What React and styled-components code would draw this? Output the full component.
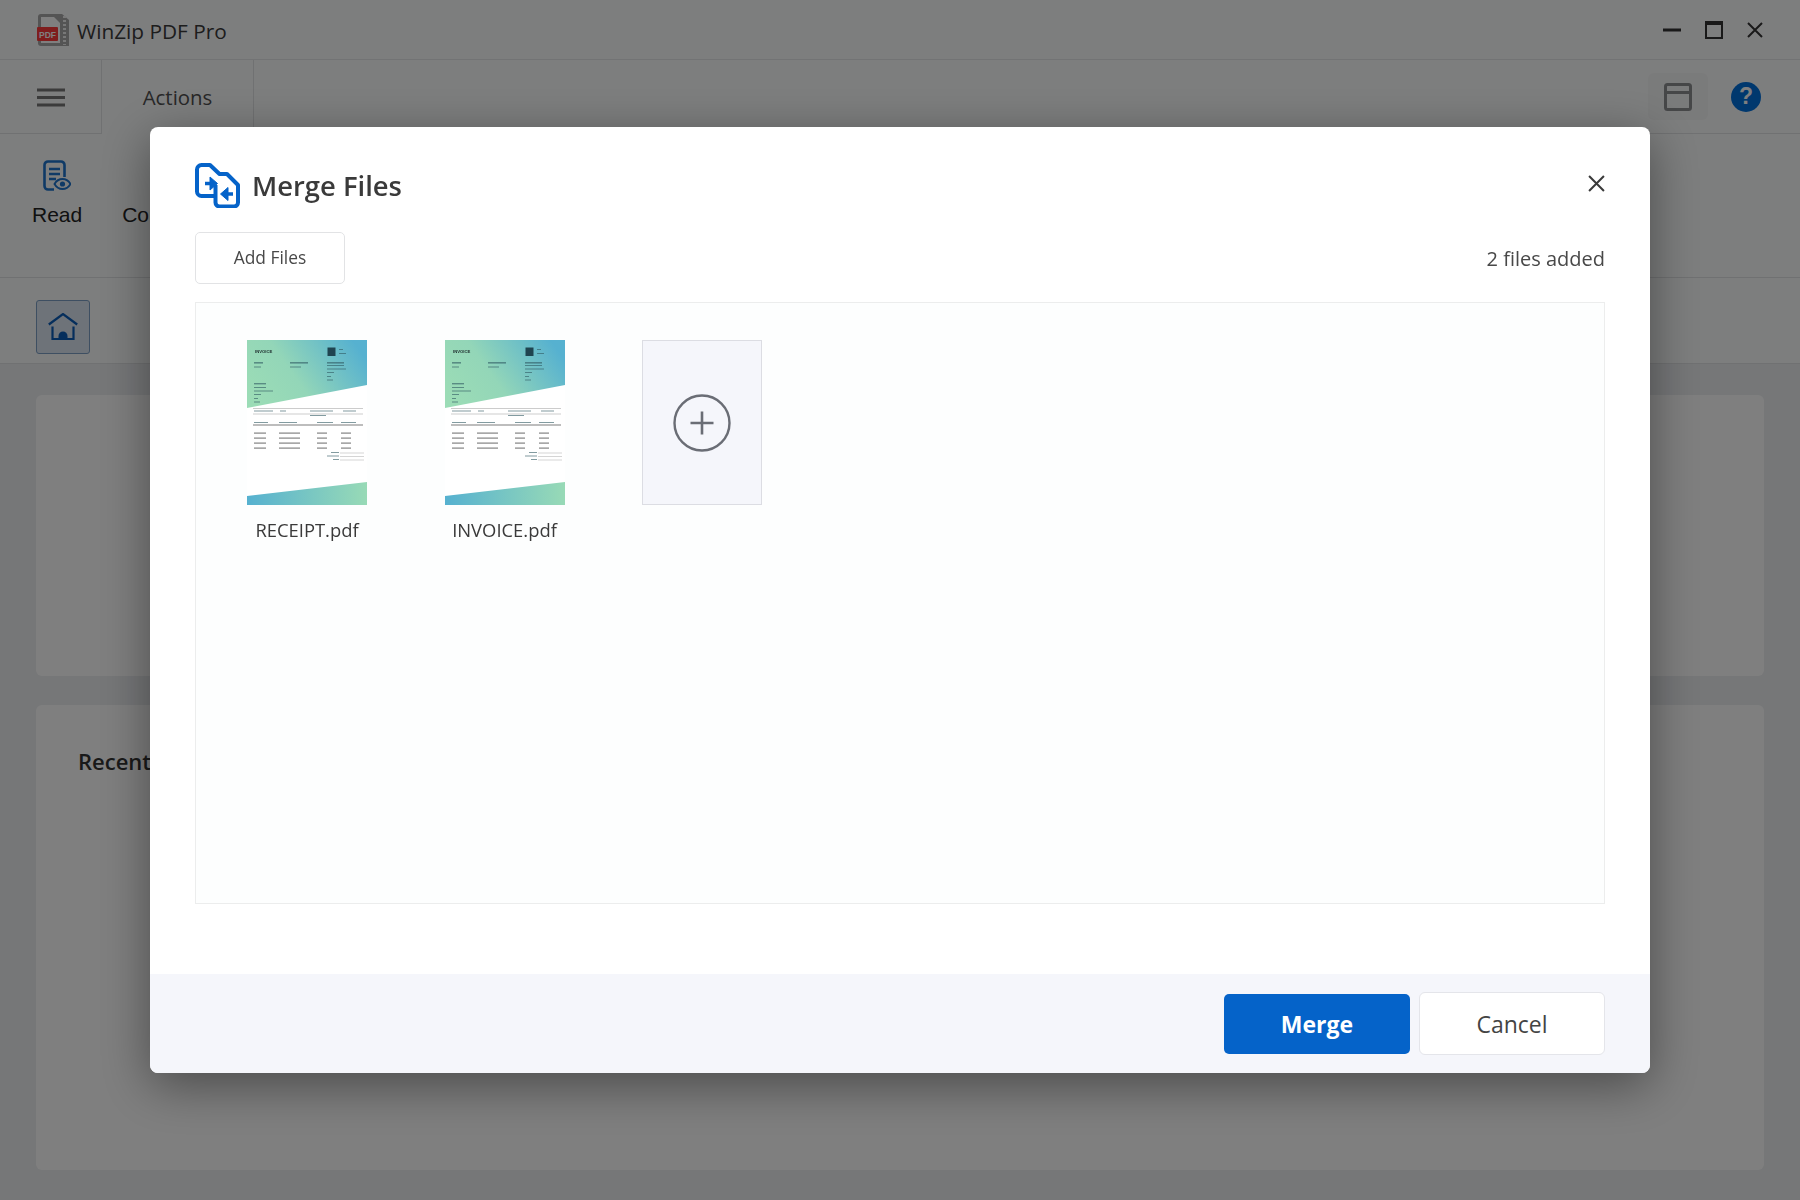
import React from "react";
import styled, { createGlobalStyle } from "styled-components";

const GlobalStyle = createGlobalStyle`
  html, body {
    margin: 0;
    padding: 0;
    height: 100%;
    font-family: "Open Sans", "Noto Sans", sans-serif;
    color: #333;
  }
`;

const Page = styled.div`
  width: 1800px;
  height: 1200px;
  overflow: hidden;
  display: flex;
  flex-direction: column;
  background: #eceef1;
`;

const TitleBar = styled.header`
  height: 60px;
  flex: none;
  box-sizing: border-box;
  display: flex;
  align-items: center;
  padding: 0 37px 0 36px;
  background: #fbfcfd;
  border-bottom: 1px solid #e4e6e8;
`;

const AppName = styled.span`
  margin: 2px 0 0 7px;
  flex: 1;
  font-size: 20.8px;
  color: #3a3a3a;
`;

const WindowButtons = styled.div`
  display: flex;
  align-items: center;
  gap: 24px;
`;

const TabRow = styled.div`
  height: 74px;
  flex: none;
  display: flex;
  background: #fbfcfd;
`;

const MenuCell = styled.div`
  width: 102px;
  display: flex;
  align-items: center;
  justify-content: center;
  box-sizing: border-box;
  padding-top: 2px;
  border-right: 1px solid #e0e2e4;
  border-bottom: 1px solid #e0e2e4;
`;

const ActionsTab = styled.div`
  width: 151px;
  display: flex;
  align-items: center;
  justify-content: center;
  font-size: 20.4px;
  color: #505050;
  border-right: 1px solid #e0e2e4;
`;

const TabFill = styled.div`
  flex: 1;
  display: flex;
  align-items: center;
  justify-content: flex-end;
  padding: 0 39px 0 0;
  gap: 23px;
  border-bottom: 1px solid #e0e2e4;
`;

const LayoutButton = styled.div`
  width: 60px;
  height: 47px;
  border-radius: 6px;
  background: #f5f6f7;
  display: flex;
  align-items: center;
  justify-content: center;
`;

const HelpBadge = styled.div`
  width: 30px;
  height: 30px;
  border-radius: 50%;
  background: #0070dc;
  color: #fff;
  font-family: "Liberation Sans", sans-serif;
  font-weight: 700;
  font-size: 23px;
  display: flex;
  align-items: center;
  justify-content: center;
`;

const Ribbon = styled.div`
  height: 144px;
  flex: none;
  box-sizing: border-box;
  display: flex;
  gap: 40px;
  padding: 26px 0 0 32px;
  background: #fbfcfd;
  border-bottom: 1px solid #e0e2e4;
`;

const RibbonItem = styled.div`
  display: flex;
  flex-direction: column;
  align-items: center;
  gap: 12px;
  font-family: "Liberation Sans", sans-serif;
  font-size: 21px;
  color: #222;
`;

const HomeRow = styled.div`
  height: 86px;
  flex: none;
  box-sizing: border-box;
  padding: 22px 0 0 36px;
  background: #fbfcfd;
  border-bottom: 1px solid #e0e2e4;
`;

const HomeButton = styled.div`
  width: 54px;
  height: 54px;
  box-sizing: border-box;
  display: flex;
  align-items: center;
  justify-content: center;
  border: 1px solid #7d9fc4;
  border-radius: 3px;
  background: #dde6f2;
`;

const Main = styled.main`
  display: flex;
  flex-direction: column;
  gap: 29px;
  padding: 31px 36px 0;
`;

const Panel = styled.section`
  box-sizing: border-box;
  height: ${({ $height }) => $height}px;
  background: #fff;
  border-radius: 6px;
  padding: 41px 42px;
`;

const PanelTitle = styled.h2`
  margin: 0;
  font-size: 22px;
  font-weight: 600;
  color: #333;
`;

const Overlay = styled.div`
  position: fixed;
  inset: 0;
  background: rgba(0, 0, 0, 0.5);
  display: flex;
  align-items: center;
  justify-content: center;
`;

const Modal = styled.div`
  width: 1500px;
  height: 946px;
  background: #fff;
  border-radius: 8px;
  overflow: hidden;
  display: flex;
  flex-direction: column;
  box-shadow: 0 12px 50px rgba(0, 0, 0, 0.42);
`;

const ModalBody = styled.div`
  flex: 1;
  display: flex;
  flex-direction: column;
  padding: 36px 45px 0;
`;

const ModalHeader = styled.div`
  height: 45px;
  display: flex;
  align-items: center;
`;

const ModalTitle = styled.h1`
  flex: 1;
  margin: 0 0 0 12px;
  font-size: 27.4px;
  font-weight: 600;
  color: #3a3a3a;
`;

const CloseButton = styled.div`
  display: flex;
  margin-top: -4px;
`;

const Toolbar = styled.div`
  margin-top: 24px;
  display: flex;
  align-items: center;
  justify-content: space-between;
`;

const AddButton = styled.div`
  width: 150px;
  height: 52px;
  box-sizing: border-box;
  display: flex;
  align-items: center;
  justify-content: center;
  padding-bottom: 2px;
  border: 1px solid #e2e3e5;
  border-radius: 5px;
  font-size: 17.4px;
  color: #484848;
`;

const FileCount = styled.span`
  font-size: 20px;
  color: #484848;
`;

const FileArea = styled.div`
  margin-top: 18px;
  height: 602px;
  box-sizing: border-box;
  display: flex;
  align-items: flex-start;
  gap: 77.5px;
  padding: 37px 51px;
  border: 1px solid #eceded;
  background: #fdfefe;
`;

const FileItem = styled.figure`
  margin: 0;
  width: 120px;
  display: flex;
  flex-direction: column;
  align-items: center;
`;

const ThumbSvg = styled.svg`
  display: block;
  filter: blur(0.35px);
`;

const FileName = styled.figcaption`
  margin-top: 12px;
  font-size: 18.4px;
  white-space: nowrap;
  color: #3a3a3a;
`;

const AddTile = styled.div`
  width: 120px;
  height: 165px;
  box-sizing: border-box;
  display: flex;
  align-items: center;
  justify-content: center;
  background: #f5f6fb;
  border: 1px solid #dcdde3;
`;

const Footer = styled.footer`
  height: 99px;
  flex: none;
  display: flex;
  align-items: center;
  justify-content: flex-end;
  gap: 9px;
  padding: 0 45px 0 0;
  background: #f5f6fb;
`;

const MergeButton = styled.div`
  width: 186px;
  height: 60px;
  display: flex;
  align-items: center;
  justify-content: center;
  border-radius: 5px;
  background: #0563c9;
  color: #fff;
  font-size: 23px;
  font-weight: 700;
`;

const CancelButton = styled.div`
  width: 186px;
  height: 63px;
  box-sizing: border-box;
  display: flex;
  align-items: center;
  justify-content: center;
  border: 1px solid #e4e5ea;
  border-radius: 6px;
  background: #fff;
  color: #444;
  font-size: 23px;
`;

const LogoIcon = () => (
  <svg width="34" height="34" viewBox="0 0 34 34">
    <path d="M5 1h21l7 6v26H5a3 3 0 0 1-3-3V4a3 3 0 0 1 3-3z" fill="#a8a8a8" />
    <path d="M28.500 3v29" stroke="#f0f0f0" strokeWidth="3" strokeDasharray="2 2" />
    <path d="M5 4h13l6 6v20H5z" fill="#fff" />
    <rect x="1" y="14" width="21" height="14" rx="1" fill="#ff3a3a" />
    <text x="11.500" y="24.500" textAnchor="middle" fontSize="8.500" fontWeight="700" fontFamily="Liberation Sans" fill="#fff">PDF</text>
  </svg>
);

const ReadIcon = () => (
  <svg width="28" height="31" viewBox="0 0 28 31" fill="none" stroke="#1f74cc" strokeWidth="2.600">
    <path d="M11 29.500H5a3.500 3.500 0 0 1-3.500-3.500V5A3.500 3.500 0 0 1 5 1.500h13A3.500 3.500 0 0 1 21.500 5v12" />
    <path d="M6 9h11M6 14h11M6 19h7" />
    <path d="M11.500 24c2-3.500 4.500-5 8-5s6 1.500 8 5c-2 3.500-4.500 5-8 5s-6-1.500-8-5z" strokeWidth="1.900" fill="#fbfcfd" />
    <circle cx="19.500" cy="24" r="2.600" fill="#1f74cc" stroke="none" />
  </svg>
);

const HomeIcon = () => (
  <svg width="30" height="28" viewBox="0 0 30 28" fill="none" stroke="#0b5db8" strokeWidth="2.200">
    <path d="M.8 11.500 15 1l14.200 10.500" />
    <path d="M4.500 13.500V26h21V13.500" />
    <path d="M10.500 26v-3a4.500 4.500 0 0 1 9 0v3z" fill="#0b5db8" stroke="none" />
  </svg>
);

const MergeIcon = () => (
  <svg width="45" height="45" viewBox="0 0 45 45" fill="none" stroke="#0563c9" strokeWidth="4" strokeLinejoin="round">
    <path d="M19 33H6.500a4.500 4.500 0 0 1-4.500-4.500V6.500A4.500 4.500 0 0 1 6.500 2h8.500l10 9.500" />
    <path d="M24 11h8l11 11v17.500a4 4 0 0 1-4 4H24.500a4 4 0 0 1-4-4V22" />
    <path d="M10 20.500h8" strokeWidth="3.600" />
    <path d="M15 14l7.500 6.500L15 27z" fill="#0563c9" strokeWidth="1" />
    <path d="M30 31h8" strokeWidth="3.600" />
    <path d="M33 24.500L25.500 31l7.500 6.500z" fill="#0563c9" strokeWidth="1" />
  </svg>
);

const PlusCircle = () => (
  <svg width="58" height="58" viewBox="0 0 58 58" fill="none" stroke="#6a6d75" strokeWidth="2.400">
    <circle cx="29" cy="29" r="27.500" />
    <path d="M17.500 29h23M29 17.500v23" strokeWidth="2.600" />
  </svg>
);

const CrossIcon = ({ size, color, width }) => (
  <svg width={size} height={size} viewBox="0 0 16 16" fill="none" stroke={color} strokeWidth={width}>
    <path d="M1 1l14 14M15 1L1 15" />
  </svg>
);

// fake text lines on the invoice page: x, y, width, height
const smallLines = [
  [7, 22, 9, 1.6], [7, 26.500, 7, 1], [43, 22, 18, 1.6], [43, 26.500, 11, 1],
  [80, 22, 17, 1.6], [80, 25, 17, 1], [80, 28.500, 19, 1], [80, 32, 7, 1], [80, 36, 4, 1], [80, 39.500, 6, 1],
  [7, 43, 12, 1.4], [7, 47, 12, 1], [7, 50.500, 19, 1], [7, 54, 7, 1], [7, 58, 4, 1], [7, 61.500, 6, 1],
  [92, 9, 4, 1], [92, 13, 7, 1],
  [7, 70.500, 19, 1], [33, 70.500, 6, 1], [63, 70.500, 23, 1], [96, 70.500, 13, 1], [63, 75, 16, 1],
  [7, 82, 14, 1], [32, 82, 18, 1], [70, 82, 16, 1], [94, 82, 15, 1],
  [84, 112, 8, 1], [80, 115.500, 12, 1], [86, 119, 6, 1],
];

const tableRows = [92.500, 97.500, 102.500, 107.500];

const InvoiceThumb = ({ id }) => (
  <ThumbSvg width="120" height="165" viewBox="0 0 120 165">
    <defs>
      <linearGradient id={`${id}-top`} x1="0" y1="0.7" x2="1" y2="0.3">
        <stop offset="0" stopColor="#9bdcb6" />
        <stop offset="0.4" stopColor="#93d6b8" />
        <stop offset="1" stopColor="#56b1d0" />
      </linearGradient>
      <linearGradient id={`${id}-bottom`} x1="0" y1="0" x2="1" y2="0">
        <stop offset="0" stopColor="#56b1d0" />
        <stop offset="1" stopColor="#98dab6" />
      </linearGradient>
    </defs>
    <rect width="120" height="165" fill="#fff" />
    <path d="M0 0h120v45L0 68z" fill={`url(#${id}-top)`} />
    <path d="M0 156l120-14v23H0z" fill={`url(#${id}-bottom)`} />
    <text x="8" y="13" fontSize="4.200" fontWeight="700" fontFamily="Liberation Sans" fill="#1d2b2c">INVOICE</text>
    <rect x="80.500" y="7.500" width="8" height="8.500" fill="#1f4450" />
    {smallLines.map(([x, y, w, h], i) => (
      <rect key={i} x={x} y={y} width={w} height={h} fill="#2e5860" opacity="0.6" />
    ))}
    <path d="M6 68.500h110M6 74h110" stroke="#999" strokeWidth="0.500" />
    <path d="M6 85h110" stroke="#444" strokeWidth="0.700" />
    {tableRows.map((y) => (
      <g key={y} fill="#333" opacity="0.6">
        <rect x="7" y={y} width="12" height="1.200" />
        <rect x="32" y={y} width="21" height="1.200" />
        <rect x="70" y={y} width="10" height="1.200" />
        <rect x="94" y={y} width="10" height="1.200" />
      </g>
    ))}
    <path d="M93 113h24M93 116.500h24M93 120h24" stroke="#aaa" strokeWidth="0.500" />
  </ThumbSvg>
);

const files = [
  { id: "receipt", name: "RECEIPT.pdf" },
  { id: "invoice", name: "INVOICE.pdf" },
];

const App = () => (
  <>
    <GlobalStyle />
    <Page>
      <TitleBar>
        <LogoIcon />
        <AppName>WinZip PDF Pro</AppName>
        <WindowButtons>
          <svg width="18" height="18" viewBox="0 0 18 18"><path d="M0 9h18" stroke="#333" strokeWidth="3" /></svg>
          <svg width="18" height="18" viewBox="0 0 18 18" fill="none" stroke="#333" strokeWidth="2">
            <rect x="1" y="1" width="16" height="16" />
            <path d="M1 2.500h16" strokeWidth="3" />
          </svg>
          <CrossIcon size={16} color="#333" width="2" />
        </WindowButtons>
      </TitleBar>
      <TabRow>
        <MenuCell>
          <svg width="28" height="19" viewBox="0 0 28 19"><path d="M0 2h28M0 9.500h28M0 17h28" stroke="#777" strokeWidth="2.800" /></svg>
        </MenuCell>
        <ActionsTab>Actions</ActionsTab>
        <TabFill>
          <LayoutButton>
            <svg width="28" height="28" viewBox="0 0 28 28" fill="none" stroke="#8c8e90" strokeWidth="3">
              <rect x="1.500" y="1.500" width="25" height="25" rx="2" />
              <path d="M1.500 9.500h25" />
            </svg>
          </LayoutButton>
          <HelpBadge>?</HelpBadge>
        </TabFill>
      </TabRow>
      <Ribbon>
        <RibbonItem><ReadIcon />Read</RibbonItem>
        <RibbonItem><ReadIcon />Compress</RibbonItem>
      </Ribbon>
      <HomeRow>
        <HomeButton><HomeIcon /></HomeButton>
      </HomeRow>
      <Main>
        <Panel $height={281} />
        <Panel $height={465}><PanelTitle>Recent Files</PanelTitle></Panel>
      </Main>
    </Page>
    <Overlay>
      <Modal>
        <ModalBody>
          <ModalHeader>
            <MergeIcon />
            <ModalTitle>Merge Files</ModalTitle>
            <CloseButton><CrossIcon size={17} color="#3a3a3a" width="1.900" /></CloseButton>
          </ModalHeader>
          <Toolbar>
            <AddButton>Add Files</AddButton>
            <FileCount>2 files added</FileCount>
          </Toolbar>
          <FileArea>
            {files.map((f) => (
              <FileItem key={f.id}>
                <InvoiceThumb id={f.id} />
                <FileName>{f.name}</FileName>
              </FileItem>
            ))}
            <AddTile><PlusCircle /></AddTile>
          </FileArea>
        </ModalBody>
        <Footer>
          <MergeButton>Merge</MergeButton>
          <CancelButton>Cancel</CancelButton>
        </Footer>
      </Modal>
    </Overlay>
  </>
);

export default App;
